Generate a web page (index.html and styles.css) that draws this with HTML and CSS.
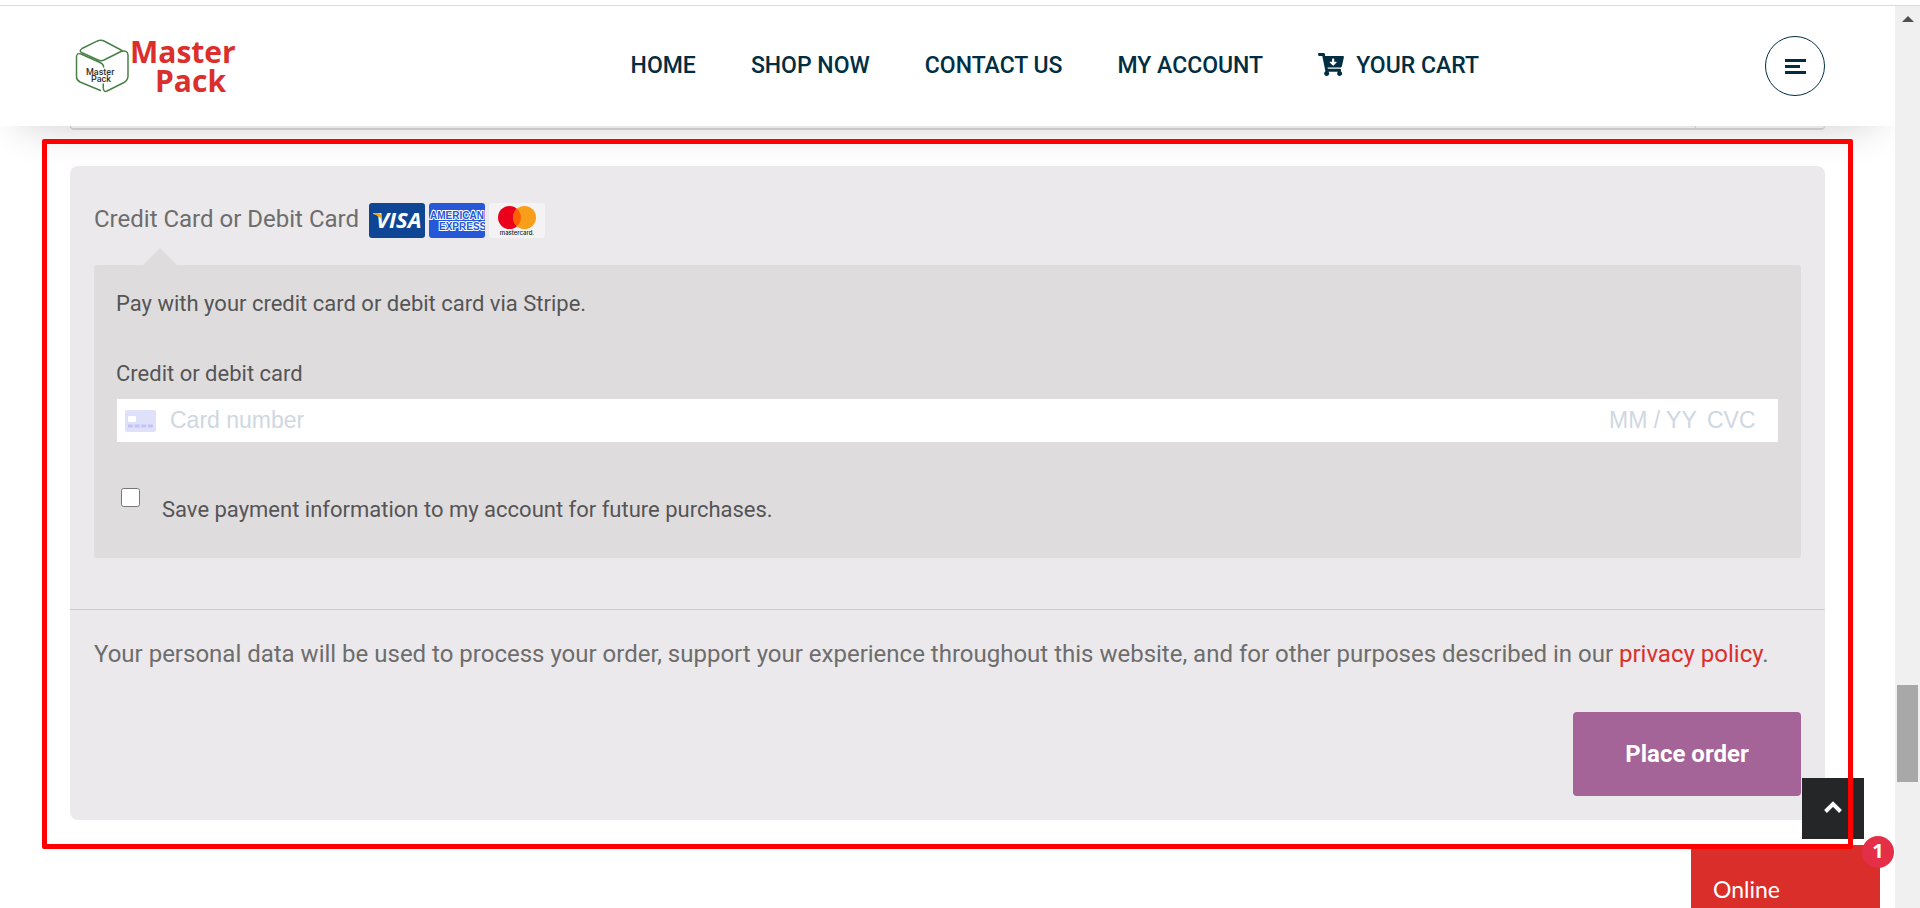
FILE: index.html
```html
<!DOCTYPE html>
<html lang="en">
<head>
<meta charset="utf-8">
<title>Checkout - Master Pack</title>
<link rel="stylesheet" href="styles.css">
</head>
<body>
<div class="window">
  <div class="page">
    <header class="header">
      <a class="logo" href="#" aria-label="Master Pack">
        <svg width="164" height="60" viewBox="74 36 164 60">
          <g fill="none" stroke="#4a8048" stroke-width="1.5" stroke-linejoin="round" stroke-linecap="round">
            <path d="M122 50.500L105 41.500Q101 39.400 97 41.200L82 48.500Q78.500 51 82 52.800L98 60Q101 61.400 104 60L121 51.500Q127.500 49.500 128 55V76Q128 80 124 82.500L107 91Q103.500 92.500 103.300 88V84"/>
            <path d="M103.500 67V66Q103.500 64.500 100 62.500L81 54Q76.500 52.500 76.500 57V77Q76.500 80 80 82L100.500 90.500"/>
          </g>
          <text x="86" y="75" class="logo-small">Master</text>
          <text x="91" y="82" class="logo-small">Pack</text>
          <text x="130" y="63" class="logo-name">Master</text>
          <text x="155" y="92" class="logo-name">Pack</text>
        </svg>
      </a>
      <nav class="nav">
        <a href="#">HOME</a>
        <a href="#">SHOP NOW</a>
        <a href="#">CONTACT US</a>
        <a href="#">MY ACCOUNT</a>
        <a href="#" class="cart">
          <svg width="26" height="23" viewBox="0 0 576 512" fill="currentColor" aria-hidden="true"><path d="M504.717 320H211.572l6.545 32h268.418c15.401 0 26.816 14.301 23.403 29.319l-5.517 24.276C523.112 414.668 536 433.828 536 456c0 31.202-25.519 56.444-56.824 55.994-29.823-.429-54.350-24.631-55.155-54.447-.440-16.287 6.085-31.049 16.803-41.548H231.176C241.553 426.165 248 440.326 248 456c0 31.813-26.528 57.431-58.670 55.938-28.540-1.325-51.751-24.385-53.251-52.917-1.158-22.034 10.436-41.455 28.051-51.586L93.883 64H24C10.745 64 0 53.255 0 40V24C0 10.745 10.745 0 24 0h102.529c11.401 0 21.228 8.021 23.513 19.190L159.208 64H551.990c15.401 0 26.816 14.301 23.403 29.319l-47.273 208C525.637 312.246 515.923 320 504.717 320zM403.029 192H360v-60c0-6.627-5.373-12-12-12h-24c-6.627 0-12 5.373-12 12v60h-43.029c-10.691 0-16.045 12.926-8.485 20.485l67.029 67.029c4.686 4.686 12.284 4.686 16.971 0l67.029-67.029c7.559-7.559 2.205-20.485-8.486-20.485z"/></svg>
          YOUR CART</a>
      </nav>
      <button class="menu" type="button" aria-label="Menu">
        <svg width="21" height="15" viewBox="0 0 21 15" fill="currentColor"><path d="M0 0h21v3H0zM0 6h15v3H0zM0 12h21v3H0z"/></svg>
      </button>
    </header>

    <main class="content">
      <div class="totals-end"><div class="totals-cell"></div></div>
      <form class="payment">
        <section class="method">
          <div class="method-title">
            <span class="method-name">Credit Card or Debit Card</span>
            <span class="brands">
              <svg width="56" height="35" viewBox="0 0 56 35" role="img" aria-label="Visa">
                <rect width="56" height="35" rx="3" fill="#0e4595"/>
                <text x="7" y="25" class="visa">VISA</text>
                <path d="M4 10h5.500q2 0 2.500 2l1.500 5.500Q10 12.500 4 11z" fill="#f2ae14"/>
              </svg>
              <svg width="56" height="35" viewBox="0 0 56 35" role="img" aria-label="American Express">
                <rect width="56" height="35" rx="3" fill="#2557d6"/>
                <text x="1" y="16" class="amex">AMERICAN</text>
                <text x="10" y="27" class="amex">EXPRESS</text>
              </svg>
              <svg width="56" height="35" viewBox="0 0 56 35" role="img" aria-label="Mastercard">
                <rect width="56" height="35" rx="3" fill="#f3f3f3"/>
                <circle cx="20.500" cy="14.500" r="11.500" fill="#eb001b"/>
                <circle cx="35.500" cy="14.500" r="11.500" fill="#f79e1b"/>
                <path d="M28 5.800a11.500 11.500 0 0 1 0 17.400a11.500 11.500 0 0 1 0-17.400z" fill="#ff5f00"/>
                <text x="28" y="32" class="mc">mastercard.</text>
              </svg>
            </span>
          </div>
          <div class="method-box">
            <p class="intro">Pay with your credit card or debit card via Stripe.</p>
            <label class="field-label" for="card">Credit or debit card</label>
            <div class="card-field">
              <svg width="31" height="22" viewBox="0 0 31 22" aria-hidden="true">
                <rect width="31" height="22" rx="2" fill="#dfe0fa"/>
                <rect x="3" y="6" width="8" height="6" rx="1" fill="#fff"/>
                <path d="M3 16h25" stroke="#c1c4f3" stroke-width="3" stroke-dasharray="5 1.600"/>
              </svg>
              <input id="card" class="number" type="text" placeholder="Card number">
              <input class="expiry" type="text" placeholder="MM / YY" aria-label="Expiry date">
              <input class="cvc" type="text" placeholder="CVC" aria-label="CVC">
            </div>
            <div class="save">
              <input id="save" type="checkbox">
              <label for="save">Save payment information to my account for future purchases.</label>
            </div>
          </div>
        </section>
        <section class="order">
          <p class="privacy">Your personal data will be used to process your order, support your experience throughout this website, and for other purposes described in our <a href="#">privacy policy</a>.</p>
          <button class="place" type="button">Place order</button>
        </section>
      </form>
    </main>

    <button class="to-top" type="button" aria-label="Back to top">
      <svg width="18" height="12" viewBox="0 0 18 12" fill="none" stroke="#fff" stroke-width="4"><path d="M1.500 10.500L9 3l7.500 7.500"/></svg>
    </button>
    <div class="chat">Online<span class="badge">1</span></div>
    <div class="highlight"></div>
  </div>
  <div class="scrollbar">
    <svg class="arrow" width="12" height="6" viewBox="0 0 12 6"><path d="M6 0l6 6H0z" fill="#505050"/></svg>
    <div class="thumb"></div>
  </div>
</div>
</body>
</html>
```
FILE: styles.css
```css
* { box-sizing: border-box; }

body {
  margin: 0;
  overflow: hidden;
  background: #fff;
  color: #555;
  font-family: Roboto, sans-serif;
}

p { margin: 0; }
a { text-decoration: none; }
button { border: 0; padding: 0; font: inherit; cursor: pointer; }

.window {
  display: flex;
  height: 100vh;
  padding-top: 5px;
}
.window::before {
  content: "";
  position: absolute;
  top: 5px;
  left: 0;
  right: 0;
  height: 1px;
  background: #dadada;
  z-index: 5;
}

.page {
  position: relative;
  flex: 1;
  min-width: 0;
}

.header {
  position: relative;
  z-index: 2;
  display: grid;
  grid-template-columns: 162fr auto 100fr;
  align-items: center;
  height: 121px;
  padding: 1px 70px 0;
  background: #fff;
  box-shadow: 0 20px 40px -20px rgba(0, 0, 0, 0.2);
}

.logo { display: block; padding-left: 4px; }
.logo svg { display: block; overflow: visible; }
.logo-name { font: 700 30px "Open Sans", sans-serif; fill: #db2f2b; }
.logo-small { font: 500 9px Roboto, sans-serif; fill: #333; }

.nav {
  display: flex;
  gap: 55px;
  color: #012e42;
  font-size: 23px;
  font-weight: 500;
  line-height: 32px;
}
.nav a { color: inherit; white-space: nowrap; }
.cart { display: flex; align-items: center; gap: 12px; }
.cart svg { margin-bottom: 4px; }

.menu {
  display: grid;
  place-items: center;
  justify-self: end;
  width: 60px;
  height: 60px;
  border: 1px solid #012e42;
  border-radius: 50%;
  background: none;
  color: #012e42;
}

.content { padding: 0 70px; }

.totals-end {
  display: flex;
  justify-content: flex-end;
  height: 4px;
  border: 1px solid #dcdcdc;
  border-top: 0;
  border-bottom-width: 2px;
  border-radius: 0 0 5px 5px;
}
.totals-cell { width: 129px; border-left: 1px solid #dcdcdc; }

.payment {
  margin-top: 36px;
  border-radius: 8px;
  background: #ebe9eb;
}

.method {
  padding: 34px 24px 51px;
  border-bottom: 1px solid #cfcdcf;
}
.method-title {
  display: flex;
  align-items: center;
  gap: 10px;
  height: 40px;
  color: #6d6d6d;
  font-size: 24px;
}
.method-name { padding-bottom: 2px; }
.brands { display: flex; gap: 4px; }
.visa { font: italic 700 22px "Open Sans", sans-serif; fill: #fff; }
.amex {
  font: 700 10px "Liberation Sans", sans-serif;
  fill: #2557d6;
  stroke: #fff;
  stroke-width: 2px;
  paint-order: stroke;
}
.mc { font: 500 6px Inter, sans-serif; text-anchor: middle; fill: #222; }

.method-box {
  position: relative;
  margin-top: 25px;
  padding: 22px 22px 31px;
  border-radius: 3px;
  background: #dfdcde;
  font-size: 22px;
  line-height: 34px;
}
.method-box::before {
  content: "";
  position: absolute;
  left: 49px;
  top: -17px;
  border: 17px solid transparent;
  border-top: 0;
  border-bottom-color: #dfdcde;
}
.field-label { display: block; margin-top: 36px; }

.card-field {
  display: flex;
  align-items: center;
  height: 43px;
  margin: 8px 1px 0;
  padding: 0 21px 0 8px;
  background: #fff;
}
.card-field input {
  min-width: 0;
  padding: 0;
  border: 0;
  outline: 0;
  background: none;
  font: 23px "Liberation Sans", Arial, sans-serif;
}
.card-field input::placeholder { color: #cfd7df; }
.card-field .number { flex: 1; margin-left: 14px; }
.card-field .expiry { width: 88px; margin-right: 10px; }
.card-field .cvc { width: 50px; }

.save {
  display: flex;
  align-items: flex-start;
  gap: 22px;
  margin-top: 46px;
  padding-left: 5px;
}
.save input { width: 19px; height: 19px; margin: 0; }
.save label { margin-top: 5px; }

.order {
  display: flex;
  flex-direction: column;
  align-items: flex-end;
  gap: 41px;
  padding: 27px 24px 24px;
}
.privacy {
  align-self: stretch;
  color: #6d6d6d;
  font-size: 24px;
  line-height: 34px;
}
.privacy a { color: #db2f2b; }
.place {
  width: 228px;
  height: 84px;
  border-radius: 4px;
  background: #a46497;
  color: #fff;
  font-size: 24px;
  font-weight: 700;
}

.to-top {
  position: absolute;
  right: 31px;
  bottom: 69px;
  width: 62px;
  height: 61px;
  padding-bottom: 3px;
  background: #242628;
}

.chat {
  position: absolute;
  right: 15px;
  bottom: 0;
  width: 189px;
  height: 63px;
  padding: 27px 22px 0;
  background: #da2e2b;
  color: #fff;
  font: 23px/34px Lato, sans-serif;
}
.badge {
  position: absolute;
  top: -9px;
  right: -14px;
  width: 32px;
  height: 32px;
  border-radius: 50%;
  background: #e52f48;
  font: 700 20px/30px "Open Sans", sans-serif;
  text-align: center;
}

.highlight {
  position: absolute;
  top: 134px;
  right: 42px;
  bottom: 59px;
  left: 42px;
  z-index: 3;
  border: 5px solid #f00;
  border-radius: 2px;
  pointer-events: none;
}

.scrollbar {
  display: flex;
  flex-direction: column;
  align-items: center;
  width: 25px;
  background: #f0f0f0;
  position: relative;
  z-index: 4;
}
.arrow { margin-top: 11px; }
.thumb {
  width: 21px;
  height: 97px;
  margin-top: 663px;
  background: #a8a8a8;
}
```
